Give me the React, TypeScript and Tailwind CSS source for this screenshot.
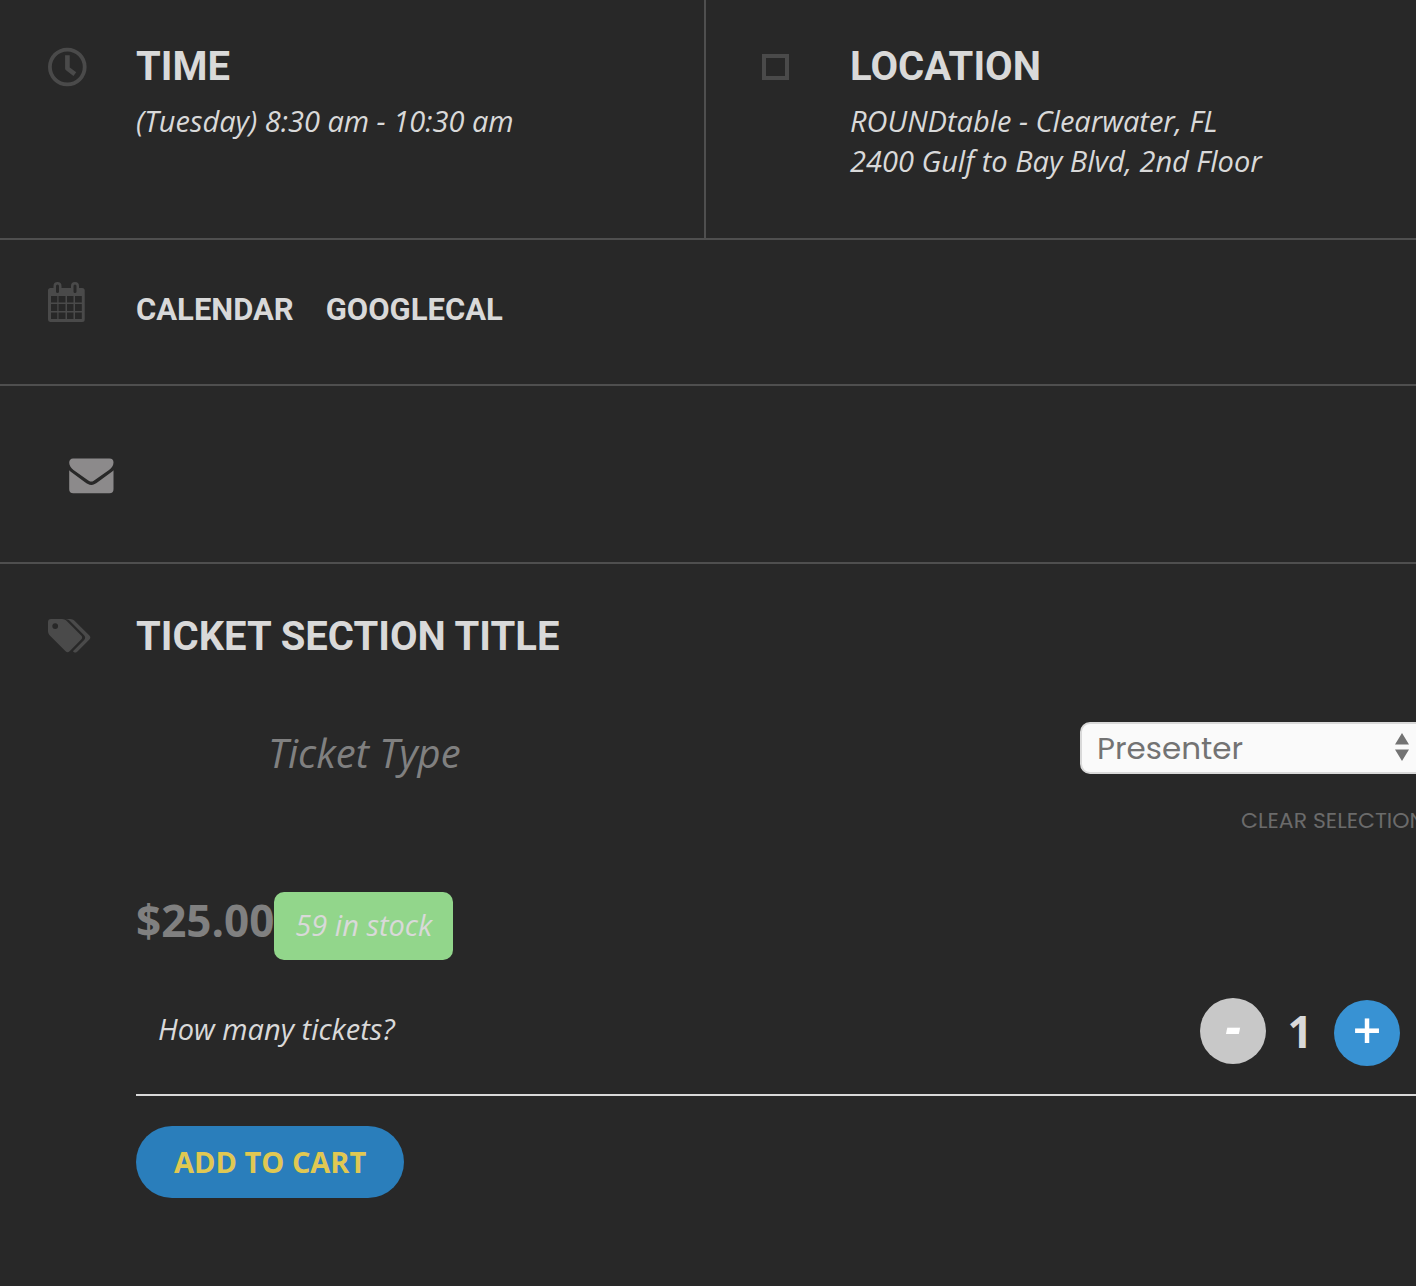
import { useState } from "react";
import type { ReactNode } from "react";

function ClockIcon() {
  return (
    <svg viewBox="0 0 40 40" className="h-10 w-10" fill="none" stroke="currentColor" aria-hidden="true">
      <circle cx="19.3" cy="20" r="17.4" strokeWidth="3.8" />
      <path d="M19.4 10.5v11l5.6 4.2" strokeWidth="4.6" strokeLinejoin="round" strokeLinecap="square" />
    </svg>
  );
}

function BoxIcon() {
  return (
    <svg viewBox="0 0 28 28" className="h-7 w-7" fill="none" stroke="currentColor" aria-hidden="true">
      <rect x="2" y="2" width="23" height="22" strokeWidth="4" />
    </svg>
  );
}

function CalendarIcon() {
  return (
    <svg viewBox="0 0 38 40" className="h-10 w-[38px]" fill="currentColor" aria-hidden="true">
      <path
        fillRule="evenodd"
        d="M2.5 6H5.500V4a4 4 0 0 1 8 0v2h9.500V4a4 4 0 0 1 8 0v2h3.200a2.500 2.500 0 0 1 2.500 2.500v29a2.500 2.500 0 0 1-2.500 2.500h-32A2.500 2.500 0 0 1 0 37.500v-29A2.500 2.500 0 0 1 2.500 6zM3 14v6.500h6.300V14zM10.500 14v6.500h7V14zM19 14v6.500h6.500V14zM27 14v6.500h6.800V14zM3 22v7h6.300v-7zM10.500 22v7h7v-7zM19 22v7h6.500v-7zM27 22v7h6.800v-7zM3 30.500V37h6.300v-6.500zM10.500 30.500V37h7v-6.500zM19 30.500V37h6.500v-6.500zM27 30.500V37h6.800v-6.500zM9.500 2.500A1.500 1.500 0 0 0 8 4v5.500a1.500 1.500 0 0 0 3 0V4A1.500 1.500 0 0 0 9.500 2.500zM27 2.500A1.500 1.500 0 0 0 25.500 4v5.500a1.500 1.500 0 0 0 3 0V4A1.500 1.500 0 0 0 27 2.500z"
      />
    </svg>
  );
}

function EnvelopeIcon() {
  return (
    <svg viewBox="0 0 46 36" className="h-9 w-[46px]" fill="currentColor" aria-hidden="true">
      <path d="M5 0.500h36.500a4 4 0 0 1 4 4c0 3-2 5.700-4.500 7.500L27.500 21.500c-1.500 1.100-2.700 2.100-4.200 2.100s-2.900-1-4.400-2.100L5.500 12C3.200 10.400 1.200 7.400 1.200 4.800 1.200 2.300 2.700 0.500 5 0.500z" />
      <path d="M1.200 12.300c.8.900 1.600 1.600 2.600 2.300l13.200 9.600c1.800 1.300 4 2.700 6.300 2.700s4.500-1.400 6.300-2.700l13.300-9.600c1-.7 1.800-1.400 2.600-2.300v19a4 4 0 0 1-4 4H5.200a4 4 0 0 1-4-4z" />
    </svg>
  );
}

function TagsIcon() {
  return (
    <svg viewBox="0 0 44 34" className="h-[34px] w-11" fill="currentColor" aria-hidden="true">
      <path
        fillRule="evenodd"
        d="M3 0h11.200c1.400 0 3.300.8 4.300 1.800L33.200 16.600a2.900 2.900 0 0 1 0 4L21.600 32.300a2.900 2.900 0 0 1-4 0L1.800 16.500C.8 15.500 0 13.700 0 12.300V3a3 3 0 0 1 3-3zM7.200 4.200a2.900 2.900 0 1 0 0 5.800 2.900 2.900 0 0 0 0-5.800z"
      />
      <path d="M17.500 0h4.700c1.400 0 3.300.8 4.300 1.800l14.900 14.800a2.900 2.900 0 0 1 0 4L29.700 32.300c-.9.900-1.500 1.200-2.300 1.200-1.100 0-1.700-.5-2.500-1.300L36.100 21a3.600 3.600 0 0 0 0-4.800L21.700 1.800C20.700.8 19 0 17.500 0z" />
    </svg>
  );
}

function Heading({ children }: { children: ReactNode }) {
  return (
    <h2 className="font-['Roboto',sans-serif] text-[40px] leading-10 font-bold text-[#d9d9d9]">{children}</h2>
  );
}

export default function App() {
  const [count, setCount] = useState(1);

  return (
    <main className="min-h-screen overflow-x-hidden bg-[#282828] font-['Open_Sans',sans-serif] text-[#d9d9d9]">
      <div className="grid grid-cols-[706fr_710fr] border-b-2 border-[#4f4f4f]">
        <section className="flex border-r-2 border-[#4f4f4f] px-12 pt-[47px] pb-[57px]">
          <div className="w-[88px] shrink-0 text-[#4a4a4a]">
            <ClockIcon />
          </div>
          <div>
            <Heading>TIME</Heading>
            <p className="mt-3.5 text-[29px] leading-10 italic">(Tuesday) 8:30 am - 10:30 am</p>
          </div>
        </section>
        <section className="flex pt-[47px] pr-12 pb-[57px] pl-14">
          <div className="w-[88px] shrink-0 pt-[7px] text-[#4a4a4a]">
            <BoxIcon />
          </div>
          <div>
            <Heading>LOCATION</Heading>
            <p className="mt-3.5 text-[29px] leading-10 italic">
              ROUNDtable - Clearwater, FL
              <br />
              2400 Gulf to Bay Blvd, 2nd Floor
            </p>
          </div>
        </section>
      </div>

      <section className="flex border-b-2 border-[#4f4f4f] px-12 pt-[42px] pb-[54px]">
        <div className="w-[88px] shrink-0 text-[#4a4a4a]">
          <CalendarIcon />
        </div>
        <nav className="flex gap-8 pt-2 font-['Roboto',sans-serif] text-[31px] leading-10 font-bold">
          <a href="#calendar">CALENDAR</a>
          <a href="#googlecal">GOOGLECAL</a>
        </nav>
      </section>

      <section className="border-b-2 border-[#4f4f4f] px-[68px] pt-[72px] pb-[68px]">
        <a href="#email" aria-label="Share by email" className="block w-[46px] text-[#8c8a8b]">
          <EnvelopeIcon />
        </a>
      </section>

      <section className="flex pt-[53px] pb-20 pl-12">
        <div className="w-[88px] shrink-0 pt-0.5 text-[#4a4a4a]">
          <TagsIcon />
        </div>
        <div className="min-w-0 grow">
          <Heading>TICKET SECTION TITLE</Heading>

          <div className="mt-[65px] -mr-4 flex justify-between">
            <label htmlFor="ticket-type" className="pt-[3px] pl-[132px] text-[40px] leading-[56px] text-[#808080] italic">
              Ticket Type
            </label>
            <div className="flex flex-col items-end">
              <div className="relative">
                <select
                  id="ticket-type"
                  className="h-[52px] w-[352px] appearance-none rounded-[10px] border-2 border-[#d9d9d9] bg-[#fafafa] pl-[15px] font-['Poppins','Inter',sans-serif] text-[31px] leading-10 text-[#737373]"
                >
                  <option>Presenter</option>
                </select>
                <svg
                  viewBox="0 0 14 28"
                  className="pointer-events-none absolute top-[11px] right-[23px] h-7 w-3.5"
                  fill="#737373"
                  aria-hidden="true"
                >
                  <path d="M7 0l7 11.500H0zM7 28L0 16.500h14z" />
                </svg>
              </div>
              <button
                type="button"
                className="mt-[31px] mr-[7px] font-['Poppins','Inter',sans-serif] text-[22px] leading-8 text-[#6b6b6b]"
              >
                CLEAR SELECTION
              </button>
            </div>
          </div>

          <div className="mt-[55px] flex items-start">
            <strong className="text-[44px] leading-[56px] font-bold text-[#808080]">$25.00</strong>
            <span className="rounded-[10px] bg-[#92d68b] px-[21px] pt-[13px] pb-[15px] text-[29px] leading-10 italic">
              59 in stock
            </span>
          </div>

          <div className="mt-[38px] flex items-start justify-between border-b-2 border-[#d9d9d9] pr-4 pb-7 pl-[22px]">
            <span className="pt-[11px] text-[29px] leading-10 italic">How many tickets?</span>
            <div className="flex items-start">
              <button
                type="button"
                aria-label="Remove one ticket"
                onClick={() => setCount(Math.max(1, count - 1))}
                className="flex h-[66px] w-[66px] justify-center rounded-full bg-[#c8c8c8] text-[50px] leading-[54px] font-bold text-white italic"
              >
                -
              </button>
              <output className="w-[68px] text-center text-[44px] leading-[66px] font-bold">{count}</output>
              <button
                type="button"
                aria-label="Add one ticket"
                onClick={() => setCount(count + 1)}
                className="mt-0.5 flex h-[66px] w-[66px] justify-center rounded-full bg-[#3892d3] text-[50px] leading-[60px] font-semibold text-white"
              >
                +
              </button>
            </div>
          </div>

          <button
            type="button"
            className="mt-[30px] rounded-full bg-[#2a7ebb] px-[38px] py-4 text-[29px] leading-10 font-bold text-[#e0c852]"
          >
            ADD TO CART
          </button>
        </div>
      </section>
    </main>
  );
}
